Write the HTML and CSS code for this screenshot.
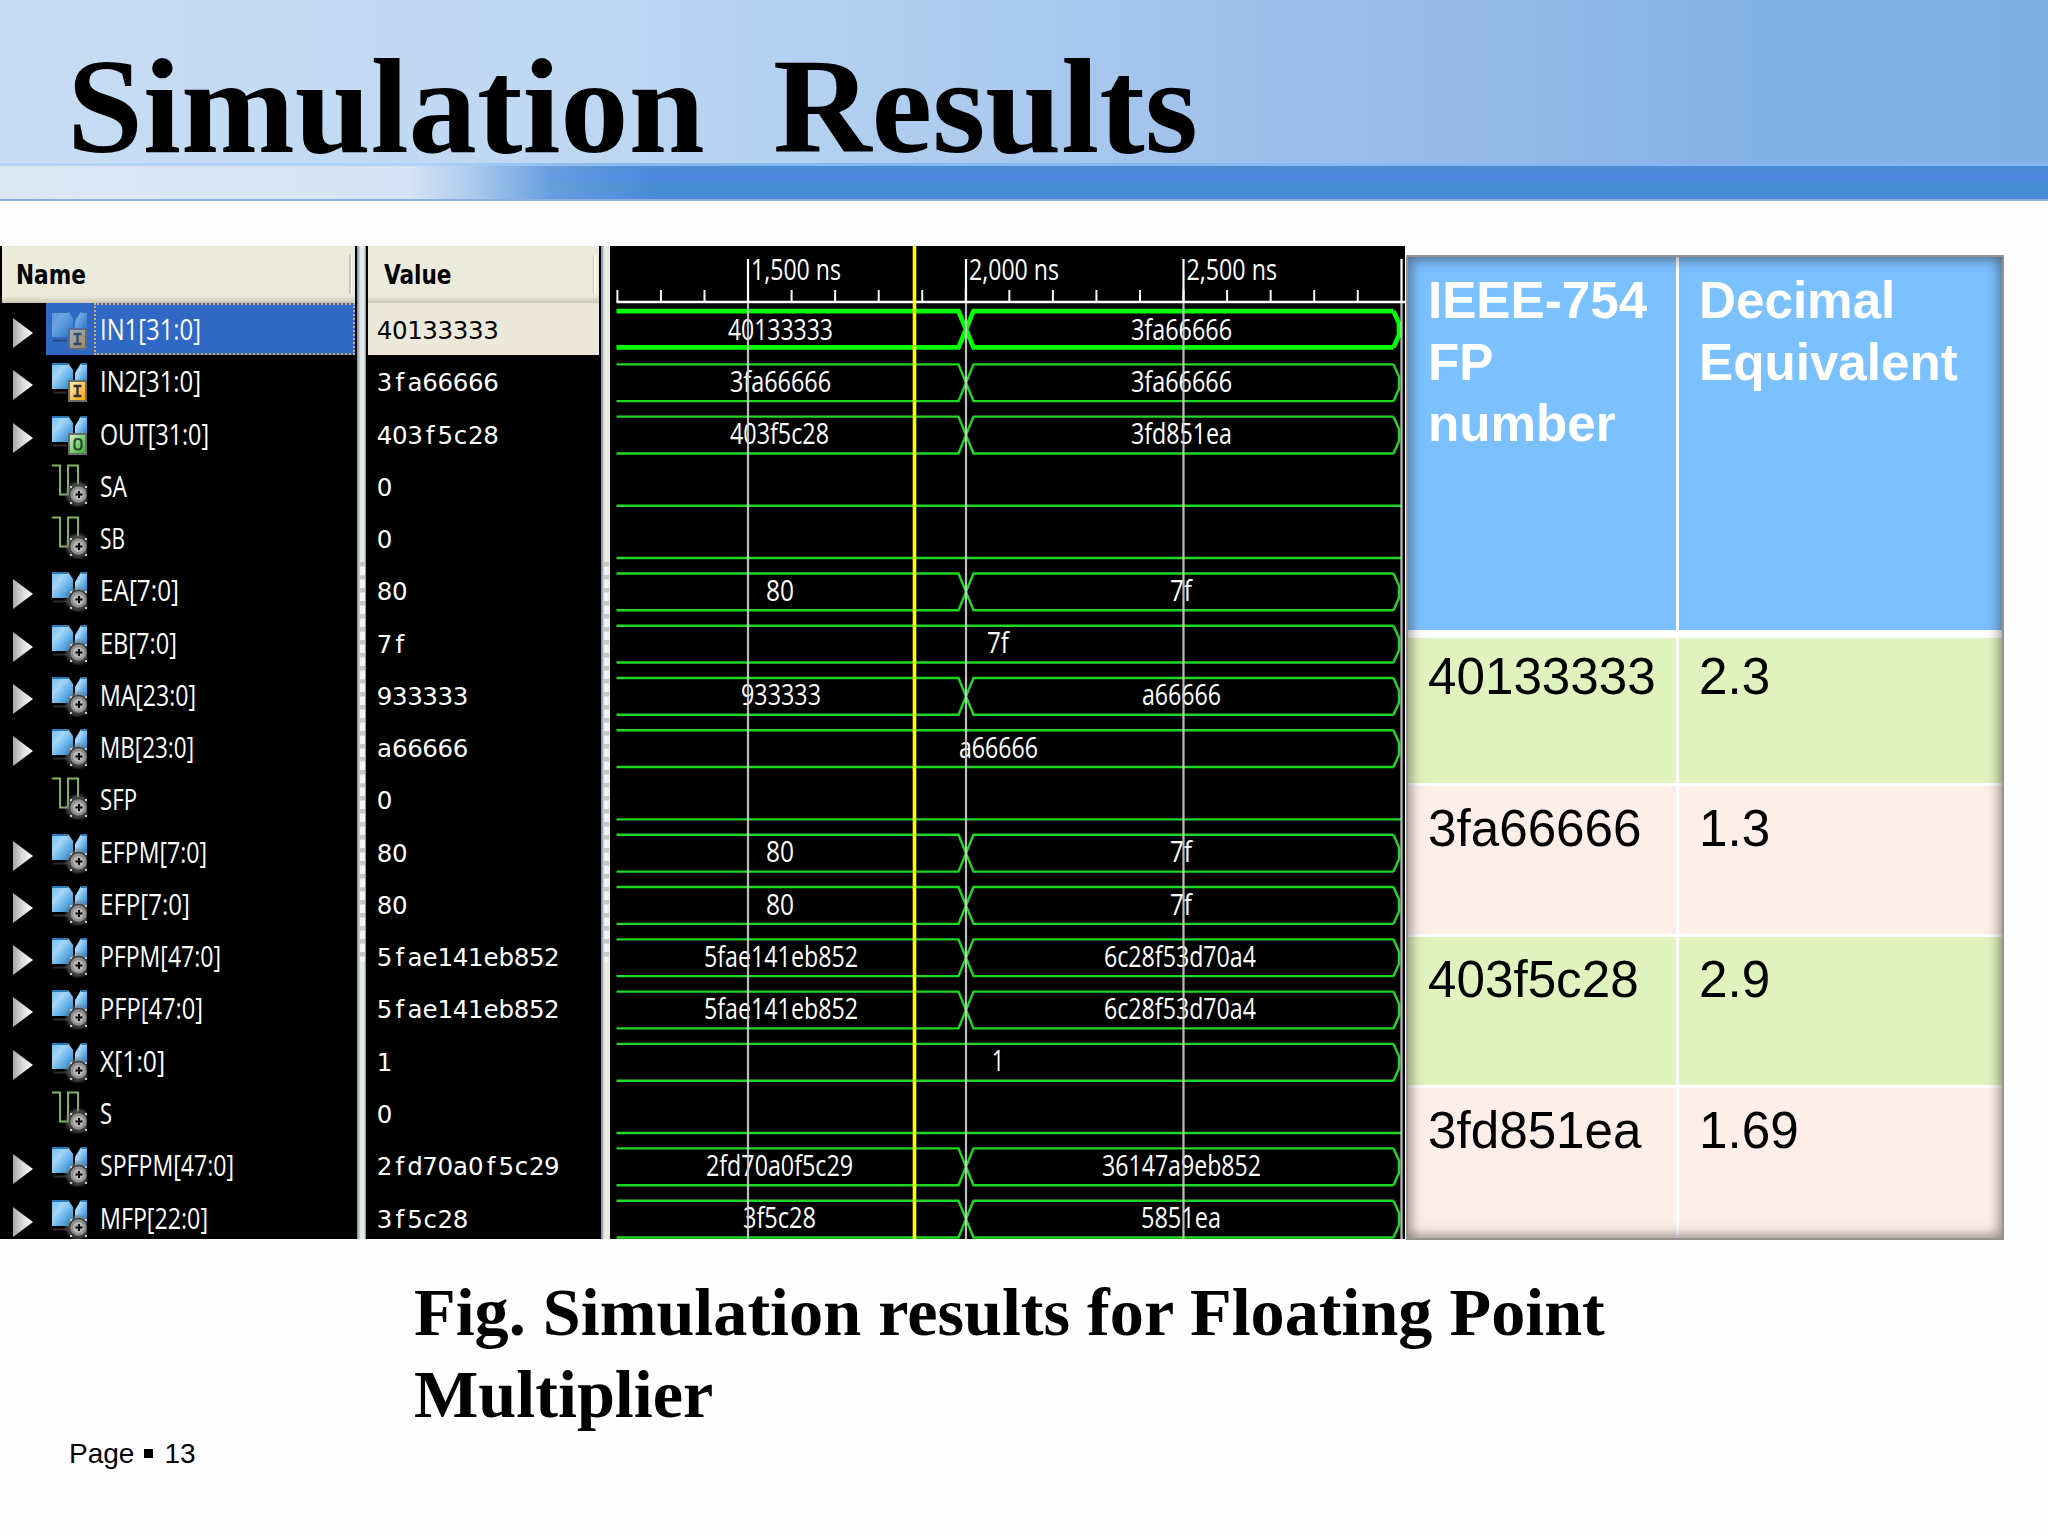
FILE: index.html
```
<!doctype html>
<html lang="en">
<head>
  <meta charset="utf-8">
  <meta name="viewport" content="width=device-width, initial-scale=1.0">
  <title>Simulation Results</title>
  <link rel="stylesheet" href="styles.css">
</head>
<body>

<!-- Shared icons -->
<svg class="defs" width="0" height="0">
  <defs>
    <linearGradient id="blue" x1="0" y1="0" x2="1" y2="1">
      <stop offset="0" stop-color="#6cbcf0"/>
      <stop offset="0.35" stop-color="#a4d6f8"/>
      <stop offset="1" stop-color="#1582d2"/>
    </linearGradient>
    <linearGradient id="arrow-fill" x1="0" x2="1">
      <stop offset="0" stop-color="#a8a8a8"/>
      <stop offset="0.5" stop-color="#dcdcdc"/>
      <stop offset="1" stop-color="#ffffff"/>
    </linearGradient>
    <linearGradient id="orange" x1="0" y1="0" x2="1" y2="1">
      <stop offset="0" stop-color="#fff0c0"/>
      <stop offset="1" stop-color="#f5a000"/>
    </linearGradient>
    <linearGradient id="green" x1="0" y1="0" x2="1" y2="1">
      <stop offset="0" stop-color="#d8f5d0"/>
      <stop offset="1" stop-color="#2fae28"/>
    </linearGradient>
    <radialGradient id="halo">
      <stop offset="0.5" stop-color="#777"/>
      <stop offset="1" stop-color="#777" stop-opacity="0"/>
    </radialGradient>
    <symbol id="arrow" viewBox="0 0 20 30">
      <path d="M0 0 L20 15 L0 30 Z" fill="url(#arrow-fill)"/>
    </symbol>
    <symbol id="bus" viewBox="0 0 35 39">
      <path d="M0 0 H16 L21 7 V20 L16 26 H0 Z" fill="url(#blue)"/>
      <path d="M35 0 H29 L23 10 V20 H35 Z" fill="url(#blue)"/>
      <path d="M0 1 H16 M29 1 H35" stroke="#2a78b8" stroke-width="2"/>
      <path d="M1 29.5 H15" stroke="#2c2c30" stroke-width="2"/>
    </symbol>
    <symbol id="gear" viewBox="0 0 35 42">
      <circle cx="26" cy="29" r="14" fill="url(#halo)"/>
      <circle cx="26.5" cy="29.5" r="9" fill="#8f8f8f" stroke="#3c3c3c" stroke-width="1.5"/>
      <circle cx="26.5" cy="29.5" r="5.5" fill="#b4b4b4"/>
      <path d="M27 26 V33 M23.5 29.5 H30.5" stroke="#000" stroke-width="2"/>
      <path d="M18 22 h2 M33 22 h2 M18 38 h2 M33 38 h2" stroke="#c8c8c8" stroke-width="2"/>
    </symbol>
    <symbol id="wire" viewBox="0 0 35 42">
      <path d="M0 1.5 H8 V30.5 H16 V1.5 H26 V20" fill="none" stroke="#7cb568" stroke-width="2"/>
    </symbol>
    <symbol id="box-i" viewBox="0 0 35 39">
      <rect x="17" y="18" width="17" height="20" fill="url(#orange)" stroke="#6c6c6c" stroke-width="2"/>
      <path d="M21.5 23 H29.5 M25.5 23 V33 M21.5 33 H29.5" stroke="#333" stroke-width="2.4" fill="none"/>
    </symbol>
    <symbol id="box-o" viewBox="0 0 35 39">
      <rect x="17" y="18" width="17" height="20" fill="url(#green)" stroke="#6c6c6c" stroke-width="2"/>
      <rect x="22.5" y="23" width="7" height="10.5" rx="3" stroke="#2c4a2c" stroke-width="2.2" fill="none"/>
    </symbol>
  </defs>
</svg>

<header class="banner">
  <h1>Simulation&nbsp; Results</h1>
  <div class="banner-bar"></div>
</header>

<main class="content">
  <section class="simulator">
    <div class="names">
      <div class="col-head"><span>Name</span></div>
      <div id="names"></div>
    </div>
    <div class="splitter"><div class="grip"></div></div>
    <div class="values">
      <div class="col-head"><span>Value</span></div>
      <div id="values"></div>
    </div>
    <div class="splitter splitter-right"><div class="grip"></div></div>
    <svg class="waves" id="waves" viewBox="610 246 795 993"></svg>
  </section>

  <table class="results">
    <thead>
      <tr><th>IEEE-754<br>FP<br>number</th><th>Decimal<br>Equivalent</th></tr>
    </thead>
    <tbody>
      <tr><td>40133333</td><td>2.3</td></tr>
      <tr><td>3fa66666</td><td>1.3</td></tr>
      <tr><td>403f5c28</td><td>2.9</td></tr>
      <tr><td>3fd851ea</td><td>1.69</td></tr>
    </tbody>
  </table>
</main>

<p class="caption">Fig. Simulation results for Floating Point<br>Multiplier</p>

<footer class="page-number">Page <span class="bullet"></span> 13</footer>

<script src="waves.js"></script>
</body>
</html>
```

FILE: styles.css
```
* {
  box-sizing: border-box;
}

body {
  margin: 0;
  width: 2048px;
  height: 1536px;
  overflow: hidden;
  background: #fefefe;
  font-family: "Liberation Sans", Arial, sans-serif;
  color: #000;
}

.defs {
  display: block;
}

/* Banner */
.banner {
  height: 201px;
  display: flex;
  flex-direction: column;
  background: linear-gradient(90deg, #c8ddf3 0%, #bdd7f3 30%, #a9c9ee 50%, #93b9e8 73%, #84b2e4 86%, #82b0e2 100%);
}

h1 {
  margin: 0;
  height: 163px;
  padding: 28px 0 0 67px;
  font-family: "Liberation Serif", "Times New Roman", serif;
  font-size: 136.6px;
  line-height: 156px;
  font-weight: bold;
  white-space: nowrap;
}

.banner-bar {
  height: 38px;
  border-top: 3px solid rgba(160, 205, 250, 0.7);
  border-bottom: 2px solid #8bb0e0;
  background:
    linear-gradient(90deg, #dde8f5 0%, #d5e3f4 20%, rgba(190, 214, 242, 0.85) 23%, rgba(130, 176, 230, 0.5) 27%, rgba(74, 138, 218, 0) 32%),
    linear-gradient(180deg, #4a8cd0, #4b87e2 35%, #458fcc 65%, #4d86e0);
}

/* Simulator and table, side by side */
.content {
  display: flex;
  align-items: flex-end;
  height: 994px;
  margin-top: 45px;
}

.simulator {
  display: flex;
  width: 1405px;
  height: 993px;
  margin-bottom: 1px;
  padding-left: 2px;
  background: #000;
  overflow: hidden;
}

.names {
  width: 355px;
}

.values {
  width: 233px;
}

.col-head {
  display: flex;
  align-items: center;
  height: 57px;
  width: 353px;
  padding: 0 3px 0 14px;
  background: linear-gradient(180deg, #ebebdc 0%, #ebeada 88%, #d6d2c2 96%, #c9c5b4 100%);
  font-family: "DejaVu Sans Condensed", "DejaVu Sans", sans-serif;
  font-size: 27px;
  font-weight: bold;
}

.col-head::after {
  content: "";
  width: 3px;
  height: 39px;
  margin-left: auto;
  background: linear-gradient(90deg, #c8c5b2 50%, #fff 50%);
}

.col-head span {
  transform: scaleX(0.89);
  transform-origin: left;
}

.values .col-head {
  width: 231px;
  padding-left: 16px;
}

.row {
  display: flex;
  align-items: flex-start;
  height: 52.27px;
}

.names .row {
  width: 353px;
}

.names .arrow {
  flex-shrink: 0;
  width: 20px;
  height: 30px;
  margin: 15px 13px 0 11px;
}

.tag {
  display: flex;
  flex: 1;
  min-width: 0;
  height: 52.27px;
}

.tag .icon {
  flex-shrink: 0;
  width: 41px;
  height: 48px;
  padding: 0 0 0 6px;
}

.tag .label {
  flex: 1;
  min-width: 0;
  height: 52px;
  margin-left: 7px;
}

.selected .tag {
  background: #2f68c5;
}

.selected .icon {
  opacity: 0.55;
}

.selected .label {
  border: 2px dotted #d9a860;
  height: 52.27px;
}

.names text,
.waves text {
  font-family: "Open Sans", "Noto Sans", sans-serif;
  font-size: 29px;
  fill: #fff;
}

.values text {
  font-family: "DejaVu Sans", sans-serif;
  font-size: 24.5px;
  fill: #fff;
  text-anchor: middle;
}

.values svg {
  width: 231px;
  height: 52.27px;
}

.values .selected svg {
  background: #ece9da;
}

.values .selected text {
  fill: #000;
}

.splitter {
  width: 11px;
  background: linear-gradient(90deg, #7f93a6 0, #a9bac8 2px, #e6e8e4 3px, #ecebe5 7px, #9fb3c4 8px, #6c8ba3 9px, #000 9px);
}

.splitter-right {
  width: 9px;
  background: linear-gradient(90deg, #7b8fae 0, #9db0ca 2px, #eeeedf 3px, #ecebda 9px);
}

.grip {
  width: 5px;
  height: 400px;
  margin: 316px 0 0 3px;
  background: repeating-linear-gradient(180deg, #c9c9c4 0, #c9c9c4 4px, #f4f4f0 5px, #f4f4f0 13px);
}

.waves {
  width: 795px;
  height: 993px;
}

/* Number table */
.results {
  width: 598px;
  height: 985px;
  margin-left: 1px;
  border-collapse: separate;
  border-spacing: 0;
  border: 2px solid #96928f;
  table-layout: fixed;
  font-size: 51.2px;
  line-height: 61.5px;
  position: relative;
}

/* soft inner shadow along the frame */
.results::after {
  content: "";
  position: absolute;
  inset: 0;
  box-shadow: inset 0 0 13px 2px rgba(40, 30, 30, 0.55);
}

.results th,
.results td {
  padding: 0 0 0 20px;
  text-align: left;
  vertical-align: top;
  white-space: nowrap;
}

.results th:first-child {
  width: 271px;
}

.results th:first-child,
.results td:first-child {
  border-right: 3px solid #fff;
}

.results th {
  height: 381px;
  padding-top: 13px;
  background: #7bc0ff;
  border-bottom: 8px solid #fff;
  color: #fff;
}

.results td {
  height: 151px;
  padding-top: 12px;
  border-bottom: 3px solid #fff;
  background: #fdefe8;
}

.results tbody tr:nth-child(odd) td {
  background: #e0f2be;
}

.results tbody tr:first-child td {
  height: 148px;
  padding-top: 8px;
}

.results tbody tr:last-child td {
  height: 150px;
  border-bottom: 0;
}

/* Caption and footer */
.caption {
  margin: 32px 0 0 414px;
  font-family: "Liberation Serif", "Times New Roman", serif;
  font-size: 68.2px;
  line-height: 81.8px;
  font-weight: bold;
}

.page-number {
  display: flex;
  align-items: center;
  margin: 0 0 0 69px;
  font-size: 28px;
  line-height: 36px;
}

.bullet {
  width: 9px;
  height: 9px;
  margin: 0 11px 0 10px;
  background: #000;
}
```

FILE: waves.js
```
// w: label width, wave: [text, left, right] for each bus segment
const signals = [
  { name: 'IN1[31:0]', w: 101, icon: 'box-i', value: '40133333', wave: [['40133333', 729, 832], ['3fa66666', 1132, 1231]] },
  { name: 'IN2[31:0]', w: 101, icon: 'box-i', value: '3fa66666', wave: [['3fa66666', 731, 830], ['3fa66666', 1132, 1231]] },
  { name: 'OUT[31:0]', w: 109, icon: 'box-o', value: '403f5c28', wave: [['403f5c28', 731, 828], ['3fd851ea', 1132, 1231]] },
  { name: 'SA', w: 27, value: '0' },
  { name: 'SB', w: 25, value: '0' },
  { name: 'EA[7:0]', w: 79, icon: 'gear', value: '80', wave: [['80', 767, 793], ['7f', 1171, 1191]] },
  { name: 'EB[7:0]', w: 77, icon: 'gear', value: '7f', wave: [['7f', 988, 1008]] },
  { name: 'MA[23:0]', w: 96, icon: 'gear', value: '933333', wave: [['933333', 742, 820], ['a66666', 1143, 1220]] },
  { name: 'MB[23:0]', w: 94, icon: 'gear', value: 'a66666', wave: [['a66666', 960, 1037]] },
  { name: 'SFP', w: 37, value: '0' },
  { name: 'EFPM[7:0]', w: 107, icon: 'gear', value: '80', wave: [['80', 767, 793], ['7f', 1171, 1191]] },
  { name: 'EFP[7:0]', w: 90, icon: 'gear', value: '80', wave: [['80', 767, 793], ['7f', 1171, 1191]] },
  { name: 'PFPM[47:0]', w: 121, icon: 'gear', value: '5fae141eb852', wave: [['5fae141eb852', 705, 857], ['6c28f53d70a4', 1105, 1255]] },
  { name: 'PFP[47:0]', w: 103, icon: 'gear', value: '5fae141eb852', wave: [['5fae141eb852', 705, 857], ['6c28f53d70a4', 1105, 1255]] },
  { name: 'X[1:0]', w: 65, icon: 'gear', value: '1', wave: [['1', 993, 1003]] },
  { name: 'S', w: 12, value: '0' },
  { name: 'SPFPM[47:0]', w: 134, icon: 'gear', value: '2fd70a0f5c29', wave: [['2fd70a0f5c29', 707, 852], ['36147a9eb852', 1103, 1260]] },
  { name: 'MFP[22:0]', w: 108, icon: 'gear', value: '3f5c28', wave: [['3f5c28', 744, 815], ['5851ea', 1142, 1220]] }
];

const ROW = 52.27;
const TOP = 303.1;

function fitted(text, x, y, w) {
  return `<text x="${x}" y="${y}" textLength="${w}" lengthAdjust="spacingAndGlyphs">${text}</text>`;
}

function nameRow(s, i) {
  const icon = s.wave
    ? `<use href="#bus" y="8" width="35" height="39"/>` +
      (s.icon === 'gear'
        ? `<use href="#gear" y="6" width="35" height="42"/>`
        : `<use href="#${s.icon}" y="8" width="35" height="39"/>`)
    : `<use href="#wire" y="4" width="35" height="42"/><use href="#gear" y="5" width="35" height="42"/>`;
  const pad = i === 0 ? 4 : 6;
  return `<div class="row ${i === 0 ? 'selected' : ''}">
    <svg class="arrow">${s.wave ? '<use href="#arrow"/>' : ''}</svg>
    <div class="tag">
      <svg class="icon">${icon}</svg>
      <svg class="label">${fitted(s.name, pad, i === 0 ? 35 : 37, s.w)}</svg>
    </div>
  </div>`;
}

function valueRow(s, i) {
  const xs = [...s.value].map((c, n) => 16.5 + n * 15.22).join(' ');
  return `<div class="row ${i === 0 ? 'selected' : ''}"><svg><text x="${xs}" y="36.3">${s.value}</text></svg></div>`;
}

function drawWaves() {
  let out = '';

  signals.forEach((s, i) => {
    const y = TOP + i * ROW;
    const t = y + (i === 0 ? 8 : 9);
    const b = y + (i === 0 ? 44.3 : 45.8);
    const m = (t + b) / 2;
    const stroke = `fill="none" stroke="${i === 0 ? '#00ff00' : '#1fd824'}" stroke-width="${i === 0 ? 4.6 : 2.4}"`;
    if (!s.wave) {
      out += `<path d="M616.5 ${b} H1401" ${stroke}/>`;
      return;
    }
    let d = '';
    if (s.wave.length === 2) {
      d += `M616.5 ${t} H958.5 L966 ${m} L958.5 ${b} H616.5 `;
      d += `M1393.5 ${t} H973.5 L966 ${m} L973.5 ${b} H1393.5 `;
    } else {
      d += `M616.5 ${t} H1393.5 M616.5 ${b} H1393.5 `;
    }
    d += `M1393.5 ${t} L1399 ${m - 6} V${m + 6} L1393.5 ${b}`;
    out += `<path d="${d}" ${stroke}/>`;
    s.wave.forEach(([text, x0, x1]) => {
      out += fitted(text, x0 - 1, y + 36.5, x1 - x0 + 2);
    });
  });

  // ruler
  out += '<path d="M616.5 302 H1405" stroke="#fff" stroke-width="2.4"/>';
  for (let n = 0; n < 18; n++) {
    const x = 617.4 + n * 43.55;
    out += `<path d="M${x} 290 V302" stroke="#fff" stroke-width="2"/>`;
  }
  [[748, '1,500 ns', 842], [966, '2,000 ns', 1060], [1183.5, '2,500 ns', 1278], [1401.5, '', 0]].forEach(([x, text, end]) => {
    out += `<path d="M${x} 259 V302" stroke="#fff" stroke-width="2.2"/>`;
    out += `<path d="M${x} 303 V1239" stroke="#d0d0d0" stroke-opacity="0.9" stroke-width="2.2"/>`;
    if (text) out += fitted(text, x + 3, 279.5, end - x - 4);
  });

  // cursor
  out += '<path d="M914.5 246 V1239" stroke="#ffff00" stroke-width="3.6"/>';
  document.getElementById('waves').innerHTML = out;
}

document.getElementById('names').innerHTML = signals.map(nameRow).join('');
document.getElementById('values').innerHTML = signals.map(valueRow).join('');
drawWaves();
```
